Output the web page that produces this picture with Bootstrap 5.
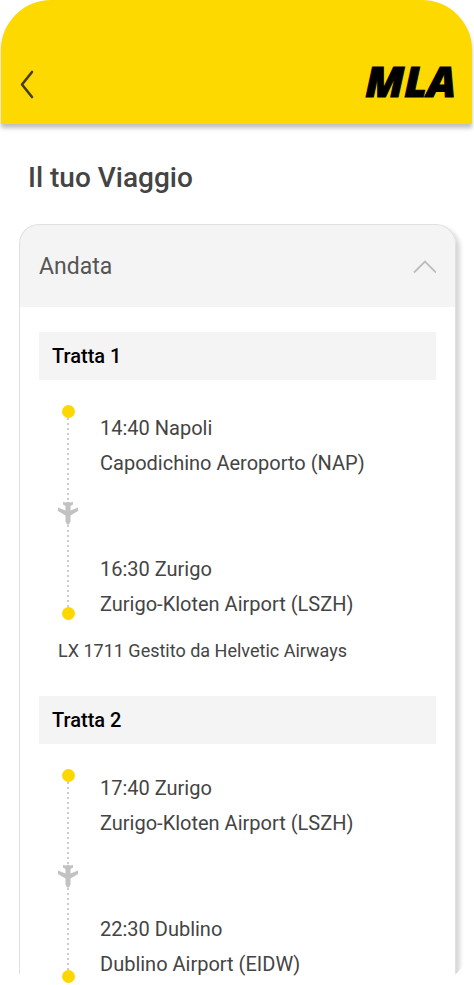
<!DOCTYPE html>
<html lang="it">
<head>
<meta charset="utf-8">
<meta name="viewport" content="width=device-width, initial-scale=1">
<title>Il tuo Viaggio</title>
<link href="https://cdn.jsdelivr.net/npm/bootstrap@5.3.0/dist/css/bootstrap.min.css" rel="stylesheet">
<style>
  body { font-family: Roboto, "Liberation Sans", sans-serif; color: #444; background: #fff; }
  .topbar { height: 124px; margin: 0 2px 0 1px; padding: 0 16px 20px 14px; background: #fdd900; border-radius: 50px 50px 0 0; box-shadow: 0 4px 4px rgba(0,0,0,.25); }
  .brand { font: italic 900 43px/46px "Open Sans", Lato, sans-serif; color: #000; -webkit-text-stroke: 1px #000; }
  .page-title { font-size: 28px; line-height: 36px; margin: 36px 28px 28px; }
  .trip { position: relative; margin: 0 18px 0 19px; padding: 0 1px; }
  .trip-frame { position: absolute; inset: 0 0 11px; border: 1px solid #e0e0e0; border-bottom: 0; border-radius: 20px 20px 0 0; box-shadow: 4px 4px 4px rgba(0,0,0,.16);
    clip-path: polygon(0 0, calc(100% + 10px) 0, calc(100% + 10px) calc(100% - 11px), 100% 100%, 0 100%); pointer-events: none; }
  .trip-head { height: 83px; padding: 3px 19px 0; background: #f4f4f4; border-radius: 20px 20px 0 0; font-size: 23px; color: #555; }
  .trip-body { padding: 25px 19px 0; }
  .leg-title { height: 48px; padding: 0 13px; margin-bottom: 25px; background: #f4f4f4; color: #000; font-size: 20px; }
  .route { padding-left: 18px; gap: 21px; }
  .rail { width: 22px; padding-bottom: 2px; }
  .stop-dot { width: 13px; height: 13px; border-radius: 50%; background: #fdd800; }
  .dots { width: 2px; background: repeating-linear-gradient(#ccc 0 2px, transparent 2px 5px); }
  .stops { padding-top: 6px; gap: 71px; font-size: 20px; line-height: 35px; }
  .stops-last { padding: 2px 0 3px; }
  .operator { font-size: 18px; line-height: 30px; margin: 14px 19px 30px; }
</style>
</head>
<body>
<header class="topbar d-flex align-items-end justify-content-between">
  <button type="button" class="btn border-0 p-0 d-flex" aria-label="Indietro">
    <svg width="26" height="40" viewBox="0 0 26 40" fill="none" stroke="#443d1c" stroke-width="2.600" stroke-linecap="round" stroke-linejoin="round"><path d="M17 8 7 20.500l10 12.500"/></svg>
  </button>
  <div class="brand">MLA</div>
</header>
<main>
  <h1 class="page-title fw-medium">Il tuo Viaggio</h1>
  <section class="trip">
    <div class="trip-frame"></div>
    <button type="button" class="trip-head btn border-0 w-100 d-flex align-items-center justify-content-between" aria-expanded="true" aria-controls="andata">
      Andata
      <svg width="24" height="14" viewBox="0 0 24 14" fill="none" stroke="#bdbdbd" stroke-width="1.800"><path d="M2 12.500 13 1.500l11 11"/></svg>
    </button>
    <div class="trip-body" id="andata">
      <article>
        <h2 class="leg-title fw-medium d-flex align-items-center">Tratta 1</h2>
        <div class="route d-flex">
          <div class="rail d-flex flex-column align-items-center">
            <span class="stop-dot"></span><span class="dots flex-fill"></span>
            <svg width="22" height="24" viewBox="0 0 22 24" fill="#c2c2c2"><path d="M6 1 9 1.500Q11 0 13 1.500L16 1V3.500L13.500 5V9.500L21 6.500V10L13.500 14.500V20.500L12 23.500H10L8.500 20.500V14.500L1 10V6.500L8.500 9.500V5L6 3.500Z"/></svg>
            <span class="dots flex-fill"></span><span class="stop-dot"></span>
          </div>
          <div class="stops d-flex flex-column">
            <div><div>14:40 Napoli</div><div>Capodichino Aeroporto (NAP)</div></div>
            <div><div>16:30 Zurigo</div><div>Zurigo-Kloten Airport (LSZH)</div></div>
          </div>
        </div>
        <p class="operator">LX 1711 Gestito da Helvetic Airways</p>
      </article>
      <article>
        <h2 class="leg-title fw-medium d-flex align-items-center">Tratta 2</h2>
        <div class="route d-flex">
          <div class="rail d-flex flex-column align-items-center">
            <span class="stop-dot"></span><span class="dots flex-fill"></span>
            <svg width="22" height="24" viewBox="0 0 22 24" fill="#c2c2c2"><path d="M6 1 9 1.500Q11 0 13 1.500L16 1V3.500L13.500 5V9.500L21 6.500V10L13.500 14.500V20.500L12 23.500H10L8.500 20.500V14.500L1 10V6.500L8.500 9.500V5L6 3.500Z"/></svg>
            <span class="dots flex-fill"></span><span class="stop-dot"></span>
          </div>
          <div class="stops stops-last d-flex flex-column">
            <div><div>17:40 Zurigo</div><div>Zurigo-Kloten Airport (LSZH)</div></div>
            <div><div>22:30 Dublino</div><div>Dublino Airport (EIDW)</div></div>
          </div>
        </div>
      </article>
    </div>
  </section>
</main>
<script src="https://cdn.jsdelivr.net/npm/bootstrap@5.3.0/dist/js/bootstrap.bundle.min.js"></script>
</body>
</html>
